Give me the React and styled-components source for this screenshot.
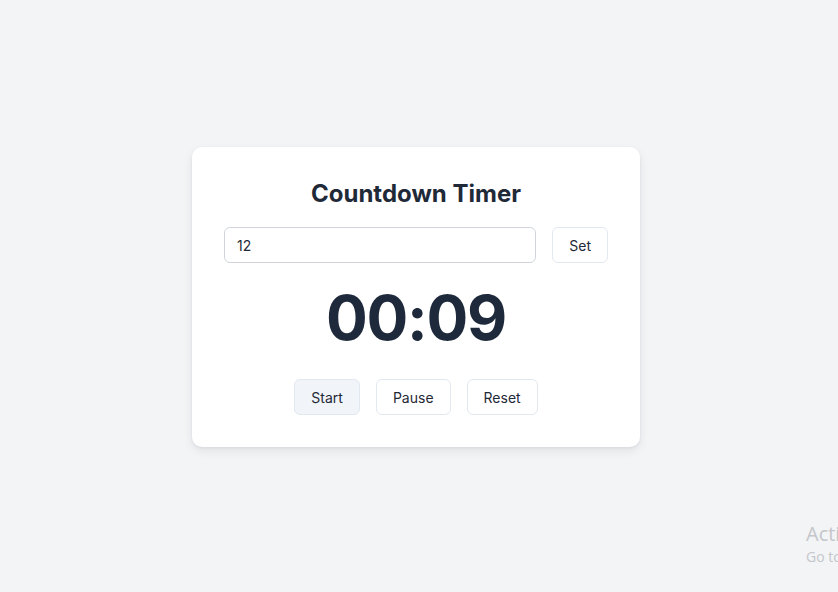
import React, { useState } from 'react';
import styled, { createGlobalStyle } from 'styled-components';

const GlobalStyle = createGlobalStyle`
    * { box-sizing: border-box; }
    html, body {
        margin: 0;
        padding: 0;
        height: 100%;
        overflow: hidden;
        background: #f3f4f6;
        font-family: Inter, "Noto Sans", Arial, sans-serif;
        color: #1f2937;
    }
    #root { height: 100%; }
`;

function format(sec) {
    const m = String(Math.floor(sec / 60)).padStart(2, '0');
    const s = String(sec % 60).padStart(2, '0');
    return `${m}:${s}`;
}

export default function App() {
    const [value, setValue] = useState('12');
    const [seconds, setSeconds] = useState(9);

    return (
        <Page>
            <GlobalStyle />
            <Card>
                <Title>Countdown Timer</Title>
                <InputRow>
                    <TimeInput value={value} onChange={e => setValue(e.target.value)} />
                    <Button onClick={() => setSeconds(parseInt(value, 10) || 0)}>Set</Button>
                </InputRow>
                <Display>{format(seconds)}</Display>
                <Controls>
                    <Button active>Start</Button>
                    <Button>Pause</Button>
                    <Button onClick={() => setSeconds(parseInt(value, 10) || 0)}>Reset</Button>
                </Controls>
            </Card>
            <Watermark>
                <strong>Activate Windows</strong>
                <span>Go to Settings to activate Windows.</span>
            </Watermark>
        </Page>
    );
}

const Page = styled.div`
    height: 100%;
    display: flex;
    align-items: center;
    justify-content: center;
    padding: 2px 6px 0 0;
`;

const Card = styled.div`
    width: 448px;
    background: #ffffff;
    border-radius: 10px;
    padding: 31px 32px 32px;
    box-shadow: 0 4px 10px rgba(15, 23, 42, 0.08), 0 1px 3px rgba(15, 23, 42, 0.06);
`;

const Title = styled.h1`
    margin: 0 0 17px;
    text-align: center;
    font-size: 24px;
    line-height: 32px;
    font-weight: 700;
    color: #1f2937;
`;

const InputRow = styled.div`
    display: flex;
    gap: 16px;
`;

const TimeInput = styled.input`
    flex: 1;
    height: 36px;
    padding: 0 12px;
    border: 1px solid #d1d5db;
    border-radius: 6px;
    font-family: inherit;
    font-size: 14px;
    color: #1f2937;
    outline: none;
`;

const Button = styled.button`
    height: 36px;
    padding: 0 16px;
    border: 1px solid #e2e8f0;
    border-radius: 6px;
    background: ${p => (p.active ? '#f1f5f9' : '#ffffff')};
    font-family: inherit;
    font-size: 14px;
    color: #1f2937;
    cursor: pointer;
`;

const Display = styled.div`
    margin: 17px 0 23px;
    text-align: center;
    font-size: 62px;
    line-height: 76px;
    letter-spacing: -0.02em;
    font-weight: 700;
    color: #1e293b;
`;

const Controls = styled.div`
    display: flex;
    justify-content: center;
    gap: 16px;
`;

const Watermark = styled.div`
    position: absolute;
    left: 806px;
    top: 521px;
    display: flex;
    flex-direction: column;
    white-space: nowrap;
    font-family: "Open Sans", "Noto Sans", sans-serif;
    color: #c4c6ca;
    strong {
        font-weight: 400;
        font-size: 20px;
        line-height: 26px;
    }
    span {
        font-size: 14px;
        line-height: 20px;
    }
`;
